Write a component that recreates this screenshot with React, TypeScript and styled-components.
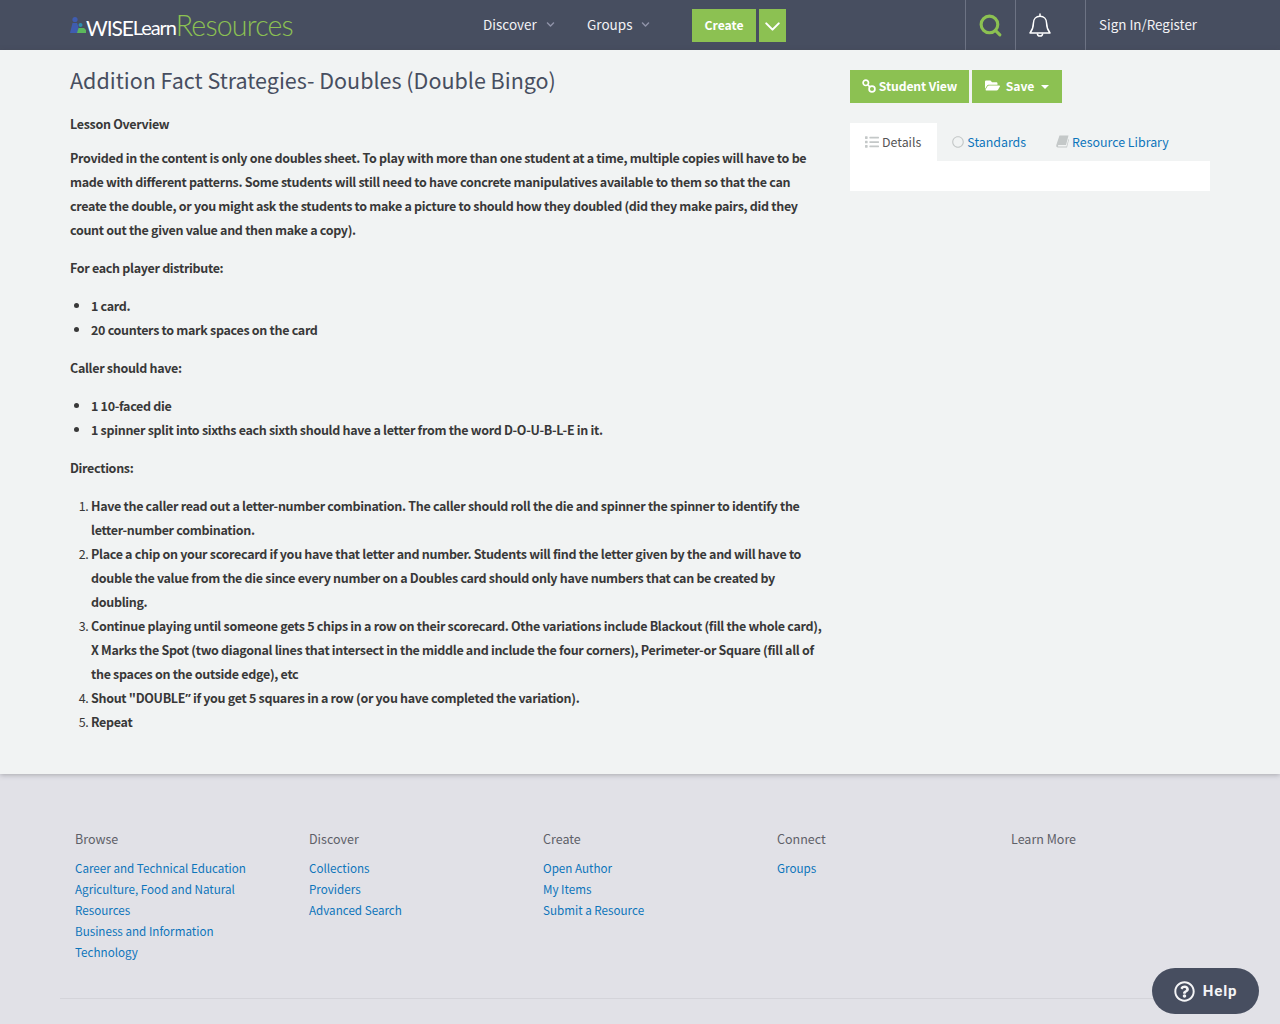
import { ReactNode } from "react";
import styled, { createGlobalStyle } from "styled-components";
import { FaChevronDown, FaFolderOpen, FaList, FaRegCircle, FaRegQuestionCircle } from "react-icons/fa";
import { ChevronDown, Search } from "lucide-react";

const GlobalStyle = createGlobalStyle`
  html, body {
    margin: 0;
    padding: 0;
    background: #e1e1e7;
  }
  body {
    font-family: "Noto Sans CJK SC", "Noto Sans", sans-serif;
    height: 1024px;
    overflow: hidden;
  }
  * {
    box-sizing: border-box;
  }
`;

const Header = styled.header`
  height: 50px;
  background: #474e60;
  display: flex;
  align-items: stretch;
  padding-left: 70px;
  color: #f2f2f5;
`;

const Logo = styled.div`
  width: 392px;
  display: flex;
  align-items: center;
  white-space: nowrap;
`;

const LogoWise = styled.span`
  font-family: "Lato", sans-serif;
  font-size: 21px;
  letter-spacing: -1.1px;
  color: #fff;
  padding-top: 4px;
`;

const LogoLearn = styled.span`
  font-family: "Lato", sans-serif;
  font-size: 20px;
  letter-spacing: -1.1px;
  color: #fff;
  padding-top: 4px;
`;

const LogoResources = styled.span`
  font-family: "Lato", sans-serif;
  font-weight: 300;
  font-size: 28.5px;
  letter-spacing: -0.8px;
  color: #8cc152;
  margin-left: 0;
`;

const Nav = styled.nav`
  display: flex;
  align-items: center;
  width: 230px;
  font-size: 13.5px;
  padding-bottom: 3px;
`;

const NavItem = styled.span<{ $width: number }>`
  width: ${(p) => p.$width}px;
  padding-left: 21px;
  display: flex;
  align-items: center;
  gap: 9px;
  color: #f2f2f5;

  svg {
    color: #8f93a8;
    width: 9px;
    height: 9px;
    margin-top: 2px;
  }
`;

const CreateGroup = styled.div`
  display: flex;
  align-items: center;
  gap: 3px;
  width: 273px;
`;

const CreateButton = styled.span`
  width: 64px;
  height: 33px;
  background: #8cc152;
  color: #fff;
  font-size: 12.2px;
  font-weight: 700;
  display: flex;
  align-items: center;
  justify-content: center;
`;

const CreateCaret = styled.span`
  width: 27px;
  height: 33px;
  background: #8cc152;
  color: #fff;
  display: flex;
  align-items: center;
  justify-content: center;
  padding-top: 3px;
`;

const IconCell = styled.div<{ $width: number }>`
  width: ${(p) => p.$width}px;
  border-left: 1px solid #6d7384;
  display: flex;
  align-items: center;
  padding-left: ${(p) => (p.$width === 50 ? 12 : 13)}px;
`;

const SignIn = styled.div`
  border-left: 1px solid #6d7384;
  padding: 0 0 3px 13px;
  display: flex;
  align-items: center;
  font-size: 13.4px;
`;

const Main = styled.main`
  height: 724px;
  background: #f1f3f3;
  box-shadow: 0 1px 5px rgba(60, 60, 70, 0.35);
  position: relative;
  display: flex;
  padding-left: 70px;
`;

const Content = styled.article`
  width: 780px;
  padding-right: 24px;
  color: #383838;
  font-size: 12.5px;
  line-height: 24px;
  font-weight: 700;
  letter-spacing: -0.31px;
`;

const Title = styled.h1`
  margin: 15px 0 17px;
  font-size: 21.5px;
  line-height: 30px;
  font-weight: 400;
  letter-spacing: 0;
  color: #474e60;
`;

const Para = styled.p<{ $tight?: boolean }>`
  margin: 0 0 ${(p) => (p.$tight ? 10 : 14)}px;
`;

const Bullets = styled.ul`
  margin: 0 0 14px;
  padding-left: 21px;

  li::marker {
    font-weight: 400;
  }
`;

const Numbers = styled.ol`
  margin: 0;
  padding-left: 21px;

  li::marker {
    font-weight: 400;
  }
`;

const LatinQuote = styled.span`
  font-family: "Noto Sans", sans-serif;
  line-height: 0;
`;

const Side = styled.aside`
  width: 360px;
  padding-top: 20px;
`;

const Actions = styled.div`
  display: flex;
  gap: 3px;
`;

const ActionButton = styled.span<{ $width: number }>`
  width: ${(p) => p.$width}px;
  height: 33px;
  padding-bottom: 2px;
  background: #8cc152;
  color: #fff;
  font-size: 12.2px;
  font-weight: 700;
  letter-spacing: -0.1px;
  display: flex;
  align-items: center;
  justify-content: center;
  gap: 3px;
`;

const SaveLabel = styled.span`
  margin: 0 4px 0 3px;
`;

const Caret = styled.i`
  width: 0;
  height: 0;
  margin-top: 2px;
  border-left: 4.5px solid transparent;
  border-right: 4.5px solid transparent;
  border-top: 4.5px solid #fff;
`;

const Tabs = styled.div`
  display: flex;
  margin-top: 20px;
  height: 38px;
  font-size: 12.4px;
`;

const Tab = styled.span<{ $active?: boolean }>`
  display: flex;
  align-items: center;
  gap: 3px;
  padding: 0 15px 1px;
  background: ${(p) => (p.$active ? "#fff" : "transparent")};
  color: ${(p) => (p.$active ? "#555" : "#0d75bb")};

  svg {
    color: #c4c8c8;
  }
`;

const DetailsLabel = styled.span`
  margin-right: 1px;
`;

const TabPanel = styled.div`
  height: 30px;
  background: #fff;
`;

const Footer = styled.footer`
  padding: 54px 60px 0;
`;

const FooterColumns = styled.div`
  display: grid;
  grid-template-columns: repeat(5, 234px);
  height: 171px;
  border-bottom: 1px solid #d4d4da;
`;

const FooterColumn = styled.div`
  padding: 0 15px;
  font-size: 11.65px;
  line-height: 21px;
`;

const FooterHeading = styled.div`
  color: #5e6068;
  font-size: 12.5px;
  margin-bottom: 8px;
`;

const FooterLink = styled.a`
  display: block;
  color: #0d75bb;
  width: 190px;
`;

const HelpButton = styled.div`
  position: fixed;
  left: 1152px;
  top: 968px;
  width: 107px;
  height: 46px;
  border-radius: 23px;
  background: #474e60;
  color: #f4f4f6;
  font-family: "Roboto", sans-serif;
  font-size: 15px;
  font-weight: 700;
  letter-spacing: 0.8px;
  display: flex;
  align-items: center;
  justify-content: center;
  gap: 8px;
`;

const LogoMark = () => (
  <svg width="16" height="18" viewBox="0 0 16 18">
    <circle cx="5" cy="3.5" r="2.6" fill="#3f5cb0" />
    <path d="M0 17 L2.5 7 L7 7 L8.5 11 L8 17 Z" fill="#3f5cb0" />
    <circle cx="10.5" cy="9" r="2" fill="#2d8fb0" />
    <path d="M7 17 L8.5 12 L14 12 L16 14 L16 17 Z" fill="#5cb85c" />
  </svg>
);

const BellIcon = () => (
  <svg width="22" height="25" viewBox="0 0 22 25" fill="none" stroke="#fff" strokeWidth="1.5" strokeLinejoin="round">
    <path d="M11 3.2c-4 0-6.6 3-6.6 7 0 5-1.2 6.800-3.400 9.800h20c-2.200-3-3.400-4.800-3.400-9.800 0-4-2.600-7-6.600-7z" />
    <path d="M11 1v2.200" strokeLinecap="round" />
    <path d="M8.400 20.500a2.600 2.600 0 0 0 5.200 0" />
  </svg>
);

const ChainIcon = () => (
  <svg width="14" height="14" viewBox="0 0 14 14" fill="none" stroke="#fff" strokeWidth="1.7">
    <circle cx="3.800" cy="3.800" r="2.700" />
    <circle cx="10" cy="10" r="2.900" />
    <path d="M5.800 5.800 L8 8" />
  </svg>
);

const BookIcon = () => (
  <svg width="13" height="13" viewBox="0 0 13 13" fill="currentColor">
    <path d="M3.500 0.500 H12.500 L10 10 H2.500 C1.800 10 1.700 11.500 2.500 11.500 H10.500 L12.500 4 L13 4.500 L11 12.500 H2 C0.500 12.500 0 11.500 0.300 10 Z" />
  </svg>
);

const footerColumns: { heading: string; links: string[] }[] = [
  {
    heading: "Browse",
    links: ["Career and Technical Education", "Agriculture, Food and Natural Resources", "Business and Information Technology"],
  },
  { heading: "Discover", links: ["Collections", "Providers", "Advanced Search"] },
  { heading: "Create", links: ["Open Author", "My Items", "Submit a Resource"] },
  { heading: "Connect", links: ["Groups"] },
  { heading: "Learn More", links: [] },
];

const Item = ({ children }: { children: ReactNode }) => <li>{children}</li>;

export default function App() {
  return (
    <>
      <GlobalStyle />
      <Header>
        <Logo>
          <LogoMark />
          <LogoWise>WISE</LogoWise>
          <LogoLearn>Learn</LogoLearn>
          <LogoResources>Resources</LogoResources>
        </Logo>
        <Nav>
          <NavItem $width={104}>
            Discover <FaChevronDown />
          </NavItem>
          <NavItem $width={105}>
            Groups <FaChevronDown />
          </NavItem>
        </Nav>
        <CreateGroup>
          <CreateButton>Create</CreateButton>
          <CreateCaret>
            <ChevronDown size={25} strokeWidth={2} />
          </CreateCaret>
        </CreateGroup>
        <IconCell $width={50}>
          <Search size={25} strokeWidth={3} color="#8cc152" />
        </IconCell>
        <IconCell $width={70}>
          <BellIcon />
        </IconCell>
        <SignIn>Sign In/Register</SignIn>
      </Header>
      <Main>
        <Content>
          <Title>Addition Fact Strategies- Doubles (Double Bingo)</Title>
          <Para $tight>Lesson Overview</Para>
          <Para>
            Provided in the content is only one doubles sheet. To play with more than one student at a time, multiple copies will have to be made with different patterns. Some students will still need to have concrete manipulatives available to them so that the can create the double, or you might ask the students to make a picture to should how they doubled (did they make pairs, did they count out the given value and then make a copy).
          </Para>
          <Para>For each player distribute:</Para>
          <Bullets>
            <Item>1 card.</Item>
            <Item>20 counters to mark spaces on the card</Item>
          </Bullets>
          <Para>Caller should have:</Para>
          <Bullets>
            <Item>1 10-faced die</Item>
            <Item>1 spinner split into sixths each sixth should have a letter from the word D-O-U-B-L-E in it.</Item>
          </Bullets>
          <Para>Directions:</Para>
          <Numbers>
            <Item>Have the caller read out a letter-number combination. The caller should roll the die and spinner the spinner to identify the letter-number combination.</Item>
            <Item>Place a chip on your scorecard if you have that letter and number. Students will find the letter given by the and will have to double the value from the die since every number on a Doubles card should only have numbers that can be created by doubling.</Item>
            <Item>Continue playing until someone gets 5 chips in a row on their scorecard. Othe variations include Blackout (fill the whole card), X Marks the Spot (two diagonal lines that intersect in the middle and include the four corners), Perimeter-or Square (fill all of the spaces on the outside edge), etc</Item>
            <Item>
              Shout "DOUBLE<LatinQuote>”</LatinQuote> if you get 5 squares in a row (or you have completed the variation).
            </Item>
            <Item>Repeat</Item>
          </Numbers>
        </Content>
        <Side>
          <Actions>
            <ActionButton $width={119}>
              <ChainIcon /> Student View
            </ActionButton>
            <ActionButton $width={90}>
              <FaFolderOpen size={15} />
              <SaveLabel>Save</SaveLabel>
              <Caret />
            </ActionButton>
          </Actions>
          <Tabs>
            <Tab $active>
              <FaList size={14} /> <DetailsLabel>Details</DetailsLabel>
            </Tab>
            <Tab>
              <FaRegCircle size={12} /> Standards
            </Tab>
            <Tab>
              <BookIcon /> Resource Library
            </Tab>
          </Tabs>
          <TabPanel />
        </Side>
      </Main>
      <Footer>
        <FooterColumns>
          {footerColumns.map((column) => (
            <FooterColumn key={column.heading}>
              <FooterHeading>{column.heading}</FooterHeading>
              {column.links.map((link) => (
                <FooterLink key={link}>{link}</FooterLink>
              ))}
            </FooterColumn>
          ))}
        </FooterColumns>
      </Footer>
      <HelpButton>
        <FaRegQuestionCircle size={21} /> Help
      </HelpButton>
    </>
  );
}
